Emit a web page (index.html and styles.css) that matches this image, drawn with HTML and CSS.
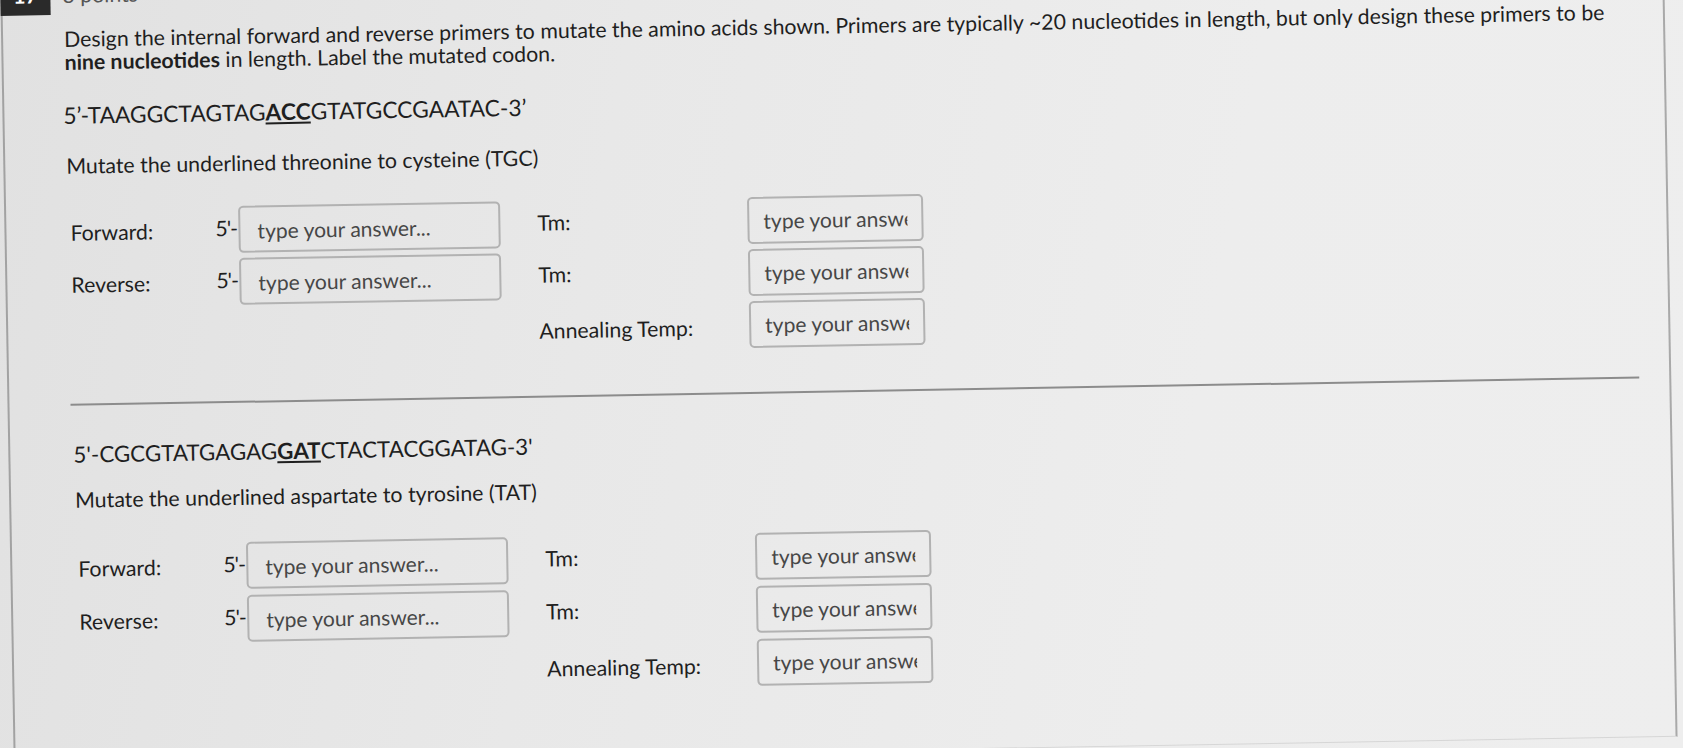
FILE: index.html
```html
<!DOCTYPE html>
<html lang="en">
<head>
<meta charset="utf-8">
<title>Primer design question</title>
<link rel="stylesheet" href="styles.css">
</head>
<body>
<div class="page">
  <div class="header">
    <div class="qnum">17</div>
    <div class="points">3 points</div>
  </div>
  <div class="content">
    <p class="intro">Design the internal forward and reverse primers to mutate the amino acids shown. Primers are typically ~20 nucleotides in length, but only design these primers to be<br><b>nine nucleotides</b> in length. Label the mutated codon.</p>

    <p class="seq seq1">5’-TAAGGCTAGTAG<u>ACC</u>GTATGCCGAATAC-3’</p>
    <p class="task task1">Mutate the underlined threonine to cysteine (TGC)</p>

    <div class="form form1">
      <div class="lbl">Forward:</div>
      <div class="pre">5'-</div>
      <input class="box wide" type="text" placeholder="type your answer...">
      <div class="tm">Tm:</div>
      <input class="box narrow" type="text" placeholder="type your answer...">

      <div class="lbl">Reverse:</div>
      <div class="pre">5'-</div>
      <input class="box wide" type="text" placeholder="type your answer...">
      <div class="tm">Tm:</div>
      <input class="box narrow" type="text" placeholder="type your answer...">

      <div class="tm anneal">Annealing Temp:</div>
      <input class="box narrow" type="text" placeholder="type your answer...">
    </div>

    <hr class="rule">

    <p class="seq seq2">5'-CGCGTATGAGAG<u>GAT</u>CTACTACGGATAG-3'</p>
    <p class="task task2">Mutate the underlined aspartate to tyrosine (TAT)</p>

    <div class="form form2">
      <div class="lbl">Forward:</div>
      <div class="pre">5'-</div>
      <input class="box wide" type="text" placeholder="type your answer...">
      <div class="tm">Tm:</div>
      <input class="box narrow" type="text" placeholder="type your answer...">

      <div class="lbl">Reverse:</div>
      <div class="pre">5'-</div>
      <input class="box wide" type="text" placeholder="type your answer...">
      <div class="tm">Tm:</div>
      <input class="box narrow" type="text" placeholder="type your answer...">

      <div class="tm anneal">Annealing Temp:</div>
      <input class="box narrow" type="text" placeholder="type your answer...">
    </div>
  </div>
</div>
</body>
</html>
```

FILE: styles.css
```css
html, body {
  margin: 0;
  padding: 0;
  width: 100%;
  height: 100%;
  overflow: hidden;
}

body {
  background: linear-gradient(100deg, #e1e1e1 0%, #e8e8e8 35%, #ededed 70%, #eeeeee 100%);
  font-family: Lato, "Open Sans", "Liberation Sans", sans-serif;
  font-size: 21.3px;
  color: #1f1f1f;
}

.page {
  width: 1664px;
  height: 790px;
  border-left: 2px solid #a2a2a2;
  border-right: 2px solid #a9a9a9;
  border-bottom: 1px solid #d6d6d6;
  transform: rotate(-1deg);
  transform-origin: 0 0;
  box-sizing: border-box;
}

.header {
  display: flex;
  align-items: center;
  gap: 12px;
  height: 40px;
  margin-top: -24px;
  margin-left: -2px;
}

.qnum {
  width: 50px;
  height: 40px;
  background: #2a2a2a;
  color: #ffffff;
  font-weight: 700;
  display: flex;
  align-items: center;
  justify-content: center;
}

.points {
  color: #555555;
}

.content {
  padding-left: 61px;
}

p {
  margin: 0;
}

.intro {
  margin-top: 13px;
  line-height: 23px;
  white-space: nowrap;
}

.intro b {
  font-weight: 700;
}

.seq {
  line-height: 24px;
  font-size: 22.8px;
}

.seq u {
  font-weight: 700;
  text-decoration-thickness: 2px;
  text-underline-offset: 2px;
}

.seq1 {
  margin-top: 29px;
  margin-left: -2px;
}

.task {
  line-height: 24px;
}

.task1 {
  margin-top: 27px;
}

.form {
  display: grid;
  grid-template-columns: 145px 23px 262px 37px 210px 176px;
  grid-auto-rows: 47px;
  row-gap: 5px;
  align-items: center;
  margin-left: 3px;
}

.form1 {
  margin-top: 31px;
}

.form2 {
  margin-top: 33px;
  row-gap: 6px;
  margin-left: 5px;
}

.lbl {
  grid-column: 1;
}

.pre {
  grid-column: 2;
  margin-top: -4px;
  letter-spacing: -1px;
}

.wide {
  grid-column: 3;
}

.tm {
  grid-column: 5;
  margin-top: -4px;
}

.anneal {
  margin-top: 4px;
}

.narrow {
  grid-column: 6;
}

.box {
  box-sizing: border-box;
  height: 47px;
  width: 100%;
  margin: 0;
  border: 2px solid #b2b2b2;
  border-radius: 5px;
  background: transparent;
  font-family: Lato, "Open Sans", "Liberation Sans", sans-serif;
  font-size: 21px;
  color: #4a4a4a;
  outline: none;
}

.wide {
  padding: 2px 14px 0 17px;
}

.narrow {
  padding: 0 14px 0 14px;
}

.box::placeholder {
  color: #474747;
  opacity: 1;
}

.rule {
  margin: 44px 0 0 0;
  width: 1569px;
  height: 0;
  border: none;
  border-top: 2px solid #8c8c8c;
}

.seq2 {
  margin-top: 37px;
  margin-left: 2px;
  font-size: 22.4px;
}

.task2 {
  margin-top: 21px;
  margin-left: 3px;
}
```
